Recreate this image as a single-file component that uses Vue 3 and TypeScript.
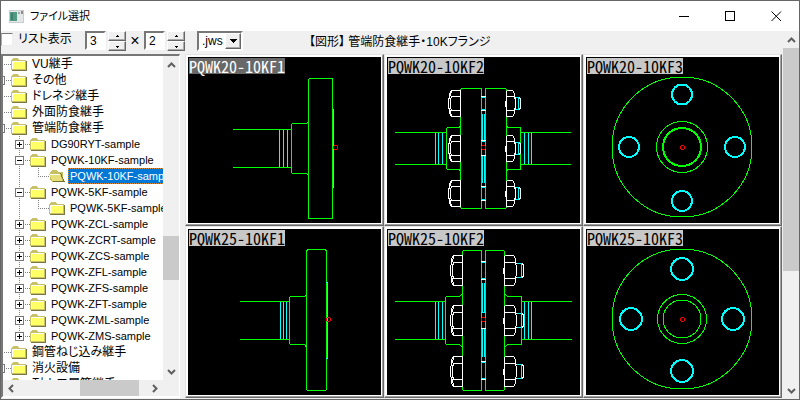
<script setup lang="ts">
import { ref } from 'vue'

interface TreeNode {
  level: 1 | 2 | 3
  name: string
  toggle?: 'plus' | 'minus' | 'edge'
  last?: boolean
  open?: boolean
}

interface Bolts {
  centers: number[]
  half: number
  inner: number
  left: number
  right: number
  nut: number
  end: number
}

interface Drawing {
  name: string
  green: string
  cyan: string
  white?: string
  red: [number, number]
  bolts?: Bolts
  rings?: { cx: number; cy: number; r: number; kind: string }[]
}

const listView = ref(false)
const columns = ref('3')
const rows = ref('2')
const extension = ref('.jws')
const selected = ref(0)

const nodes: TreeNode[] = [
  { level: 1, name: 'VU継手' },
  { level: 1, name: 'その他', toggle: 'edge' },
  { level: 1, name: 'ドレネジ継手' },
  { level: 1, name: '外面防食継手' },
  { level: 1, name: '管端防食継手', toggle: 'edge' },
  { level: 2, name: 'DG90RYT-sample', toggle: 'plus' },
  { level: 2, name: 'PQWK-10KF-sample', toggle: 'minus' },
  { level: 3, name: 'PQWK-10KF-sample', open: true },
  { level: 2, name: 'PQWK-5KF-sample', toggle: 'minus' },
  { level: 3, name: 'PQWK-5KF-sample' },
  { level: 2, name: 'PQWK-ZCL-sample', toggle: 'plus' },
  { level: 2, name: 'PQWK-ZCRT-sample', toggle: 'plus' },
  { level: 2, name: 'PQWK-ZCS-sample', toggle: 'plus' },
  { level: 2, name: 'PQWK-ZFL-sample', toggle: 'plus' },
  { level: 2, name: 'PQWK-ZFS-sample', toggle: 'plus' },
  { level: 2, name: 'PQWK-ZFT-sample', toggle: 'plus' },
  { level: 2, name: 'PQWK-ZML-sample', toggle: 'plus' },
  { level: 2, name: 'PQWK-ZMS-sample', toggle: 'plus', last: true },
  { level: 1, name: '鋼管ねじ込み継手' },
  { level: 1, name: '消火設備', toggle: 'edge' },
  { level: 1, name: '耐火二層管継手' },
]

const prefixWidth = (n: TreeNode) => [27, 46, 65][n.level - 1]
const folderX = (n: TreeNode) => [8, 27, 46][n.level - 1]

const drawings: Drawing[] = [
  {
    name: 'PQWK20-10KF1',
    green:
      'M121 21.5H144.5V161.5H120.5V21.5M120.5 64.5L118.5 66.5H104.5L103.5 67.5V115.5L104.5 116.5H118.5L120.5 118.5M45 72.5H103M45 110.5H103',
    cyan: 'M91.5 73V110M95.5 73V110M99.5 73V110M145.5 52V131',
    red: [147.5, 90.5],
  },
  {
    name: 'PQWK20-10KF2',
    green:
      'M73.5 32V151M74 31.5H94.5V151.5H74M119.5 32V151M119 31.5H98.5V151.5H119M73.5 67.5L72.5 70.5H60.5L59.5 71.5V111.5L60.5 112.5H72.5L73.5 115.5M119.5 67.5L120.5 70.5H133.5V112.5H120.5L119.5 115.5M8 75.5H59M8 107.5H59M134 75.5H184M134 107.5H184',
    cyan: 'M48.5 76V107M51.5 76V107M55.5 76V107M137.5 76V107M141.5 76V107M144.5 76V107M95.5 57V84M97.5 57V84M95.5 98V126M97.5 98V126M95 40.5H98M95 52.5H98M95 84.5H98M95 130.5H98M95 142.5H98',
    white: 'M94 39.5H99M94 53.5H99M94 83.5H99M94 98.5H99M94 129.5H99M94 143.5H99',
    red: [96.5, 90.5],
    bolts: { centers: [46.5, 91.5, 136.5], half: 13, inner: 7, left: 73.5, right: 119.5, nut: 8, end: 133.5 },
  },
  {
    name: 'PQWK20-10KF3',
    green: '',
    cyan: '',
    red: [96.5, 90.5],
    rings: [
      { cx: 96, cy: 90, r: 70, kind: 'thin' },
      { cx: 96, cy: 90, r: 25.5, kind: 'thin' },
      { cx: 96, cy: 90, r: 19, kind: 'thick' },
      { cx: 96, cy: 37.5, r: 10, kind: 'hole' },
      { cx: 43, cy: 90, r: 10, kind: 'hole' },
      { cx: 149, cy: 90, r: 10, kind: 'hole' },
      { cx: 96, cy: 144, r: 10, kind: 'hole' },
    ],
  },
  {
    name: 'PQWK25-10KF1',
    green:
      'M119.5 20.5H137.5L138.5 22.5V160.5L137.5 161.5H119.5L118.5 160.5V22.5L119.5 20.5M118.5 65.5L116.5 67.5H102.5L101.5 68.5V114.5L102.5 115.5H116.5L118.5 118M52 72.5H101M52 110.5H101',
    cyan: 'M92.5 73V110M95.5 73V110M98.5 73V110M139.5 53V130M138 53.5H140M138 129.5H140',
    red: [140.5, 90.5],
  },
  {
    name: 'PQWK25-10KF2',
    green:
      'M75.5 22V161M76 21.5H94.5V161.5H76M117.5 22V161M117 21.5H98.5V161.5H117M75.5 64.5L72.5 67.5H59.5L58.5 68.5V114.5L59.5 115.5H72.5L75.5 118.5M117.5 64.5L120.5 67.5H134.5V115.5H120.5L117.5 118.5M8 72.5H58M8 110.5H58M135 72.5H185M135 110.5H185',
    cyan: 'M48.5 73V110M51.5 73V110M55.5 73V110M137.5 73V110M141.5 73V110M144.5 73V110M95.5 54V84M97.5 54V84M95.5 99V128M97.5 99V128M94 33.5H99M95 49.5H98M94 83.5H99M95 133.5H98M94 149.5H99',
    white: 'M94 32.5H99M94 50.5H99M94 99.5H99M94 132.5H99M94 150.5H99',
    red: [96.5, 90.5],
    bolts: { centers: [41.5, 91.5, 142.5], half: 15, inner: 8, left: 75.5, right: 117.5, nut: 11, end: 136.5 },
  },
  {
    name: 'PQWK25-10KF3',
    green: '',
    cyan: '',
    red: [96.5, 90.5],
    rings: [
      { cx: 96, cy: 90, r: 70, kind: 'thin' },
      { cx: 96, cy: 90, r: 24.5, kind: 'thin' },
      { cx: 96, cy: 90, r: 19, kind: 'thin' },
      { cx: 96, cy: 40, r: 11, kind: 'bold-hole' },
      { cx: 45, cy: 90, r: 11, kind: 'bold-hole' },
      { cx: 147, cy: 90, r: 11, kind: 'bold-hole' },
      { cx: 96, cy: 142, r: 11, kind: 'bold-hole' },
    ],
  },
]

/* Hexagonal head and nut outlines for one bolt, around its own axis. */
function boltWhite(b: Bolts, cy: number): string {
  const t = cy - b.half
  const u = cy + b.half
  const i = cy - b.inner
  const j = cy + b.inner
  const l = b.left
  const r = b.right
  const n = r + b.nut
  return [
    `M${l} ${t}V${u}M${l} ${t}H${l - 9}L${l - 11} ${t + 3}V${i}L${l - 12} ${cy - 3}V${cy + 3}L${l - 11} ${j}V${u - 3}L${l - 9} ${u}H${l}`,
    `M${l} ${i}H${l - 9}L${l - 10} ${cy - 4}V${cy + 4}L${l - 9} ${j}H${l}M${l - 9} ${t}L${l - 10} ${i}M${l - 10} ${j}L${l - 9} ${u}`,
    `M${r} ${t}V${u}M${r} ${t}H${n - 2}L${n} ${t + 3}V${i}L${n + 1} ${cy - 3}V${cy + 3}L${n} ${j}V${u - 3}L${n - 2} ${u}H${r}`,
    `M${r} ${i}H${n}M${r} ${j}H${n}M${r - 1} ${cy - 3}V${cy + 3}`,
    `M${n} ${i + 1}H${b.end - 1}L${b.end} ${i + 3}V${j - 3}L${b.end - 1} ${j - 1}H${n}`,
  ].join('')
}

function boltCyan(b: Bolts, cy: number): string {
  const n = b.right + b.nut
  const i = cy - b.inner + 1
  const j = cy + b.inner - 1
  return `M${b.end - 2} ${i}V${j}M${n + 1} ${i}H${b.end - 2}M${n + 1} ${j}H${b.end - 2}`
}

function step(target: 'columns' | 'rows', delta: number) {
  const source = target === 'columns' ? columns : rows
  source.value = String(Math.max(1, Number(source.value) + delta))
}
</script>

<template>
  <div class="window">
    <header class="titlebar">
      <svg class="app-icon" width="15" height="13" viewBox="0 0 15 13" aria-hidden="true">
        <rect width="15" height="13" fill="#c9cdd0" />
        <rect x="1" y="1" width="13" height="11" fill="#e4e6e8" />
        <rect x="1" y="2" width="7" height="9" fill="#4f9a80" />
        <rect x="2" y="3" width="2" height="7" fill="#3d8070" />
        <rect x="9" y="2" width="2" height="2" fill="#a9a9a9" />
        <rect x="12" y="1" width="2" height="3" fill="#8d8d8d" />
      </svg>
      <h1>ファイル選択</h1>
      <div class="caption-buttons">
        <button type="button" aria-label="最小化">
          <svg width="11" height="11" viewBox="0 0 11 11"><path d="M0 5.5H10" /></svg>
        </button>
        <button type="button" aria-label="最大化">
          <svg width="11" height="11" viewBox="0 0 11 11"><path d="M.5.5H9.5V9.5H.5Z" /></svg>
        </button>
        <button type="button" aria-label="閉じる">
          <svg class="smooth" width="11" height="11" viewBox="0 0 11 11"><path d="M.5.5L10 10M10 .5L.5 10" /></svg>
        </button>
      </div>
    </header>

    <div class="body">
      <div class="main">
        <form class="toolbar" @submit.prevent>
          <label class="check"><input v-model="listView" type="checkbox" />リスト表示</label>
          <div class="number">
            <input v-model="columns" type="text" aria-label="列数" />
            <div class="spin">
              <button type="button" aria-label="列を増やす" @click="step('columns', 1)">
                <svg width="5" height="3" viewBox="0 0 5 3"><path d="M2 0H3V1H4V2H1V1H2Z" /></svg>
              </button>
              <button type="button" aria-label="列を減らす" @click="step('columns', -1)">
                <svg width="5" height="3" viewBox="0 0 5 3"><path d="M1 1H4V2H3V3H2V2H1Z" /></svg>
              </button>
            </div>
          </div>
          <span class="times">×</span>
          <div class="number">
            <input v-model="rows" type="text" aria-label="行数" />
            <div class="spin">
              <button type="button" aria-label="行を増やす" @click="step('rows', 1)">
                <svg width="5" height="3" viewBox="0 0 5 3"><path d="M2 0H3V1H4V2H1V1H2Z" /></svg>
              </button>
              <button type="button" aria-label="行を減らす" @click="step('rows', -1)">
                <svg width="5" height="3" viewBox="0 0 5 3"><path d="M1 1H4V2H3V3H2V2H1Z" /></svg>
              </button>
            </div>
          </div>
          <div class="combo">
            <select v-model="extension" aria-label="拡張子">
              <option>.jws</option>
            </select>
            <span class="combo-arrow">
              <svg width="7" height="4" viewBox="0 0 7 4"><path d="M0 0H7V1H6V2H5V3H4V4H3V3H2V2H1V1H0Z" /></svg>
            </span>
          </div>
          <p class="caption">【図形】 管端防食継手・10Kフランジ</p>
        </form>

        <div class="content">
          <nav class="tree-panel" aria-label="フォルダ">
            <div class="tree-row">
              <ul class="tree">
                <li v-for="(node, i) in nodes" :key="i" :class="{ current: node.open, nested: node.level > 1 }">
                  <svg :width="prefixWidth(node)" height="16" :viewBox="`0 0 ${prefixWidth(node)} 16`" aria-hidden="true">
                    <path v-if="node.level === 1" class="dots" d="M1 8.5H8" />
                    <path v-if="node.level === 2" class="dots" d="M22 8.5H27" />
                    <path v-if="node.level >= 2 && !node.last" class="dots" d="M16.5 0V16" />
                    <path v-if="node.last" class="dots" d="M16.5 0V8" />
                    <path v-if="node.level === 3" class="dots" d="M35.5 0V8.5H46" />
                    <path v-if="node.toggle === 'edge'" class="box" d="M0 4.5H1.5V12.5H0" />
                    <g v-if="node.toggle === 'plus' || node.toggle === 'minus'">
                      <rect class="box" x="12.5" y="4.5" width="8" height="8" />
                      <path class="sign" d="M14 8.5H19" />
                      <path v-if="node.toggle === 'plus'" class="sign" d="M16.5 6V11" />
                    </g>
                    <g v-if="node.open" :transform="`translate(${folderX(node)} 0)`">
                      <path fill="#c8c060" d="M1 4L3 2H7L9 4H14V14H3L1 12Z" />
                      <path fill="#e6de78" d="M0 6H11L14 14H4Z" />
                      <path fill="#fff" d="M1 6H11V7H1Z" />
                      <path fill="none" stroke="#77742f" d="M11.5 5L15 13.5H4" />
                    </g>
                    <g v-else :transform="`translate(${folderX(node)} 0)`">
                      <path fill="#c9c167" d="M0 4H1L2 2H7L8 4H15V14H0Z" />
                      <path fill="#fff" d="M1 5H14V6H2V13H1Z" />
                      <path fill="#ffff66" d="M2 6H14V13H2Z" />
                      <path fill="#77773f" d="M15 5H16V15H1V14H15Z" />
                    </g>
                  </svg>
                  <a href="#">{{ node.name }}</a>
                </li>
              </ul>
              <div class="scroll vertical">
                <button type="button" aria-label="上へ">
                  <svg width="9" height="6" viewBox="0 0 9 6"><path d="M1 5L4.5 1.5L8 5" /></svg>
                </button>
                <span class="gap tree-before"></span>
                <span class="thumb tree-thumb"></span>
                <span class="gap tree-after"></span>
                <button type="button" aria-label="下へ">
                  <svg width="9" height="6" viewBox="0 0 9 6"><path d="M1 1L4.5 4.5L8 1" /></svg>
                </button>
              </div>
            </div>
            <div class="tree-foot">
              <div class="scroll horizontal">
                <button type="button" aria-label="左へ">
                  <svg width="6" height="9" viewBox="0 0 6 9"><path d="M5 1L1.5 4.5L5 8" /></svg>
                </button>
                <span class="gap foot-before"></span>
                <span class="thumb foot-thumb"></span>
                <span class="gap foot-after"></span>
                <button type="button" aria-label="右へ">
                  <svg width="6" height="9" viewBox="0 0 6 9"><path d="M1 1L4.5 4.5L1 8" /></svg>
                </button>
              </div>
            </div>
          </nav>

          <main class="gallery">
            <button
              v-for="(item, i) in drawings"
              :key="item.name"
              type="button"
              class="cell"
              :class="{ selected: selected === i }"
              @click="selected = i"
            >
              <svg class="drawing" viewBox="0 0 193 166" aria-hidden="true">
                <path class="green" :d="item.green" />
                <path class="cyan" :d="item.cyan" />
                <path v-if="item.white" class="white" :d="item.white" />
                <template v-if="item.bolts">
                  <g v-for="cy in item.bolts.centers" :key="cy">
                    <path class="white" :d="boltWhite(item.bolts, cy)" />
                    <path class="cyan" :d="boltCyan(item.bolts, cy)" />
                  </g>
                </template>
                <circle
                  v-for="(ring, k) in item.rings"
                  :key="k"
                  :class="ring.kind"
                  :cx="ring.cx"
                  :cy="ring.cy"
                  :r="ring.r"
                />
                <circle class="red" :cx="item.red[0]" :cy="item.red[1]" r="2" />
              </svg>
              <span class="label">{{ item.name }}</span>
            </button>
          </main>
        </div>
      </div>

      <div class="scroll vertical page-scroll">
        <button type="button" aria-label="前のページ">
          <svg width="9" height="6" viewBox="0 0 9 6"><path d="M1 5L4.5 1.5L8 5" /></svg>
        </button>
        <span class="thumb page-thumb"></span>
        <span class="gap page-after"></span>
        <button type="button" aria-label="次のページ">
          <svg width="9" height="6" viewBox="0 0 9 6"><path d="M1 1L4.5 4.5L8 1" /></svg>
        </button>
      </div>
    </div>
  </div>
</template>

<style>
body {
  margin: 0;
  overflow: hidden;
}
</style>

<style scoped>
* {
  box-sizing: border-box;
}

button,
input,
select {
  margin: 0;
  padding: 0;
  border: 0;
  border-radius: 0;
  font: inherit;
  color: inherit;
}

.window {
  display: flex;
  flex-direction: column;
  height: 100vh;
  border: 1px solid #666;
  background: #f0f0f0;
  color: #000;
  font-family: 'Liberation Sans', 'Noto Sans CJK JP', sans-serif;
  font-size: 12px;
  line-height: 16px;
  font-feature-settings: 'palt';
}

.titlebar {
  flex: none;
  display: flex;
  align-items: center;
  height: 30px;
  padding-left: 8px;
  background: #fff;
}

.titlebar h1 {
  flex: 1;
  margin: 0;
  padding-left: 6px;
  font-size: 11px;
  font-weight: 400;
}

.caption-buttons {
  display: flex;
}

.caption-buttons button {
  display: grid;
  place-items: center;
  width: 46px;
  height: 28px;
  background: transparent;
}

.caption-buttons path {
  fill: none;
  stroke: #000;
  shape-rendering: crispEdges;
}

.caption-buttons .smooth path {
  shape-rendering: auto;
}

.body,
.content,
.tree-row {
  flex: 1;
  display: flex;
  min-height: 0;
}

.main {
  flex: 1;
  display: flex;
  flex-direction: column;
  min-width: 0;
  padding-right: 1px;
}

.toolbar {
  flex: none;
  display: flex;
  align-items: flex-start;
  height: 23px;
}

.check {
  display: flex;
  align-items: center;
  gap: 5px;
  width: 84px;
}

.check input {
  appearance: none;
  width: 12px;
  height: 13px;
  border: 1px solid;
  border-color: #777 #eee #eee #aaa;
  background: #fff;
}

.number {
  display: flex;
  gap: 2px;
}

.number input {
  width: 21px;
  height: 19px;
  padding-left: 3px;
  border: 2px solid;
  border-color: #777 #fff #fff #777;
  background: #fff;
}

.spin {
  display: flex;
  flex-direction: column;
}

.spin button {
  display: grid;
  place-items: center;
  width: 18px;
  height: 10px;
  border: 1px solid;
  border-color: #fff #666 #666 #fff;
  box-shadow: inset -1px -1px 0 #aaa;
  background: #f0f0f0;
}

.times {
  width: 18px;
  padding-top: 2px;
  font-size: 16px;
  text-align: center;
}

.combo {
  display: grid;
  margin-left: 12px;
  width: 46px;
  height: 20px;
  border: 2px solid;
  border-color: #777 #fff #fff #777;
  background: #fff;
}

.combo select,
.combo-arrow {
  grid-area: 1 / 1;
}

.combo select {
  appearance: none;
  padding-left: 3px;
  background: transparent;
}

.combo-arrow {
  display: grid;
  place-items: center;
  justify-self: end;
  width: 16px;
  border: 1px solid;
  border-color: #fff #666 #666 #fff;
  box-shadow: inset -1px -1px 0 #aaa;
  background: #f0f0f0;
  pointer-events: none;
}

.caption {
  flex: 1;
  margin: 0;
  padding: 3px 0 0 66px;
  white-space: nowrap;
}

.content {
  gap: 5px;
  padding-bottom: 1px;
}

.tree-panel {
  flex: none;
  display: flex;
  flex-direction: column;
  width: 179px;
  border: 1px solid;
  border-width: 2px 1px 2px 2px;
  border-color: #777 #fff #fff #777;
}

.tree {
  flex: 1;
  min-width: 0;
  margin: 0;
  padding: 0;
  overflow: hidden;
  list-style: none;
  background: #fff;
}

.tree li {
  display: flex;
  height: 16px;
  white-space: nowrap;
}

.tree .nested {
  font-size: 11px;
}

.tree svg {
  flex: none;
  shape-rendering: crispEdges;
}

.tree a {
  padding: 0 2px;
  color: inherit;
  text-decoration: none;
}

.tree .current a {
  outline: 1px dotted #d98a3a;
  outline-offset: -1px;
  background: #0078d7;
  color: #fff;
}

.dots {
  fill: none;
  stroke: #808080;
  stroke-dasharray: 1 1;
}

.box {
  fill: #fff;
  stroke: #777;
}

.sign {
  stroke: #000;
}

.scroll {
  flex: none;
  display: flex;
  background: #f0f0f0;
}

.scroll.vertical {
  flex-direction: column;
  width: 16px;
}

.scroll.horizontal {
  flex: 1;
  height: 16px;
}

.scroll button {
  flex: none;
  display: grid;
  place-items: center;
  width: 16px;
  height: 17px;
  background: #f0f0f0;
}

.scroll.horizontal button {
  height: 16px;
}

.scroll button path {
  fill: none;
  stroke: #606060;
  stroke-width: 2;
}

.thumb {
  background: #cacaca;
}

.tree-before {
  flex: 163;
}

.tree-thumb {
  flex: 44;
}

.tree-after {
  flex: 83;
}

.tree-foot {
  display: flex;
  padding-right: 16px;
}

.foot-before {
  flex: 61;
}

.foot-thumb {
  flex: 59;
}

.foot-after {
  flex: 8;
}

.page-thumb {
  flex: 223;
}

.page-after {
  flex: 111;
}

.gallery {
  flex: 1;
  display: grid;
  grid-template-columns: repeat(3, 1fr);
  grid-template-rows: repeat(2, 1fr);
  min-width: 0;
}

.cell {
  display: grid;
  min-width: 0;
  min-height: 0;
  border: 1px solid;
  border-color: #e3e3e3 #696969 #696969 #e3e3e3;
  padding: 2px;
  background: #fff;
  box-shadow: inset -1px -1px 0 #a0a0a0;
}

.drawing,
.label {
  grid-area: 1 / 1;
}

.drawing {
  width: 100%;
  height: 100%;
  background: #000;
  fill: none;
  shape-rendering: crispEdges;
}

.label {
  align-self: start;
  justify-self: start;
  margin: 1px;
  background: #c8c8c8;
  color: #000;
  font-family: 'Noto Sans CJK JP', monospace;
  font-size: 16px;
  line-height: 16px;
  font-feature-settings: 'hwid';
}

.selected .label {
  background: #686868;
  color: #fff;
}

.green,
.thin {
  stroke: #0f0;
}

.thick {
  stroke: #0f0;
  stroke-width: 2;
}

.cyan {
  stroke: #0ff;
}

.hole,
.bold-hole {
  stroke: #0ff;
  stroke-width: 2;
}

.white {
  stroke: #fff;
}

.red {
  stroke: #f00;
}
</style>
